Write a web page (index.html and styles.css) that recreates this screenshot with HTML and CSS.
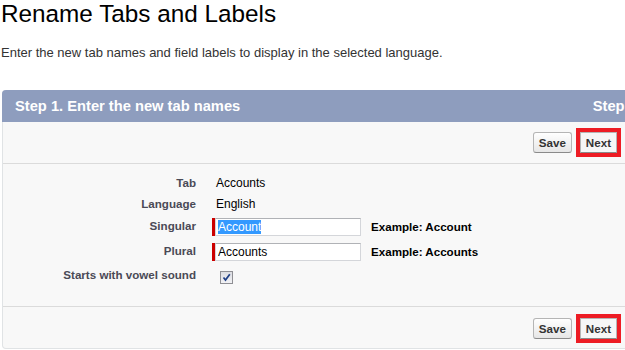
FILE: index.html
```html
<!DOCTYPE html>
<html lang="en">
<head>
    <meta charset="UTF-8">
    <title>Rename Tabs and Labels</title>
    <link rel="stylesheet" href="styles.css">
</head>
<body>
    <h1>Rename Tabs and Labels</h1>
    <p class="intro">Enter the new tab names and field labels to display in the selected language.</p>

    <div class="page-block">
        <div class="pb-header">
            <span>Step 1. Enter the new tab names</span>
            <span>Step 1 of 2</span>
        </div>

        <div class="pb-buttons">
            <button class="btn">Save</button>
            <button class="btn highlight">Next</button>
        </div>

        <div class="detail">
            <div class="row">
                <span class="label">Tab</span>
                <span class="value">Accounts</span>
            </div>
            <div class="row">
                <span class="label">Language</span>
                <span class="value">English</span>
            </div>
            <div class="row">
                <span class="label field-label">Singular</span>
                <span class="required"><input type="text" id="singular" value="Account"></span>
                <span class="example">Example: Account</span>
            </div>
            <div class="row">
                <span class="label field-label">Plural</span>
                <span class="required"><input type="text" id="plural" value="Accounts"></span>
                <span class="example">Example: Accounts</span>
            </div>
            <div class="row">
                <span class="label">Starts with vowel sound</span>
                <span class="checkbox">
                    <svg width="11" height="11" viewBox="0 0 11 11"><path d="M2.5 5.5 L4.5 8 L8.8 2.2" fill="none" stroke="#1f3f86" stroke-width="1.7"/></svg>
                </span>
            </div>
        </div>

        <div class="pb-buttons bottom">
            <button class="btn">Save</button>
            <button class="btn highlight">Next</button>
        </div>
    </div>

    <script>
        const singular = document.getElementById('singular');
        singular.focus();
        singular.select();
    </script>
</body>
</html>
```

FILE: styles.css
```css
html, body {
    overflow: hidden;
}

body {
    margin: 0;
    padding: 0 0 0 1px;
    font-family: "Liberation Sans", Arial, sans-serif;
    background: #fff;
    color: #000;
}

h1 {
    margin: 0 0 18px;
    font-size: 24.3px;
    font-weight: normal;
    line-height: 27px;
}

.intro {
    margin: 0 0 30px;
    font-size: 13px;
    line-height: 15px;
    color: #333;
}

.page-block {
    width: 677px;
    margin-left: 1px;
    background: #f8f8f8;
    border: 1px solid #e0e3e5;
    border-top: none;
    border-radius: 4px;
    box-sizing: border-box;
}

.pb-header {
    display: flex;
    justify-content: space-between;
    height: 32px;
    margin: 0 -1px;
    padding: 8px 12px 8px 13px;
    box-sizing: border-box;
    background: #8e9dbe;
    color: #fff;
    font-size: 14.7px;
    font-weight: bold;
    line-height: 16px;
    border-radius: 4px 4px 0 0;
}

.pb-buttons {
    display: flex;
    justify-content: flex-end;
    gap: 8px;
    padding: 10px 61px 10px 0;
    border-bottom: 1px solid #dbdbdb;
}

.pb-buttons.bottom {
    border-bottom: none;
    border-top: 1px solid #dbdbdb;
    padding-top: 11px;
    padding-bottom: 9px;
}

.btn {
    height: 21px;
    padding: 0 5px;
    font-family: "Liberation Sans", Arial, sans-serif;
    font-size: 11.6px;
    font-weight: bold;
    color: #333;
    background: linear-gradient(#ffffff, #e6e6e6);
    border: 1px solid #b5b5b5;
    border-bottom-color: #8a8a8a;
    border-radius: 3px;
}

.btn.highlight {
    background: #f6f6f6;
    border-radius: 0;
    outline: 4px solid #ed1c24;
}

.detail {
    display: flex;
    flex-direction: column;
    gap: 7px;
    padding: 12px 0 22px;
}

.row {
    display: grid;
    grid-template-columns: 193px 149px auto;
    column-gap: 16px;
    align-items: start;
}

.label {
    text-align: right;
    font-size: 11.6px;
    font-weight: bold;
    line-height: 14px;
    color: #4a4a56;
}

.field-label {
    padding-top: 1px;
}

.value {
    padding-left: 4px;
    font-size: 12px;
    line-height: 14px;
}

.required {
    display: flex;
    border-left: 3px solid #c00;
}

.required input {
    width: 146px;
    height: 18px;
    margin: 0;
    padding: 0 2px;
    box-sizing: border-box;
    font-family: "Liberation Sans", Arial, sans-serif;
    font-size: 12px;
    color: #000;
    background: #fff;
    border: 1px solid #d4d6da;
    border-top-color: #b0b2b6;
    outline: none;
}

.required input::selection {
    background: #3399ff;
    color: #fff;
}

.example {
    margin-left: -6px;
    padding-top: 2px;
    font-size: 11.6px;
    font-weight: bold;
    line-height: 14px;
    color: #000;
}

.checkbox {
    display: flex;
    align-items: center;
    justify-content: center;
    width: 13px;
    height: 13px;
    margin: 3px 0 0 8px;
    box-sizing: border-box;
    border: 1px solid #8f8f94;
    background: linear-gradient(#dcdde2, #f2f2f5);
}
```
